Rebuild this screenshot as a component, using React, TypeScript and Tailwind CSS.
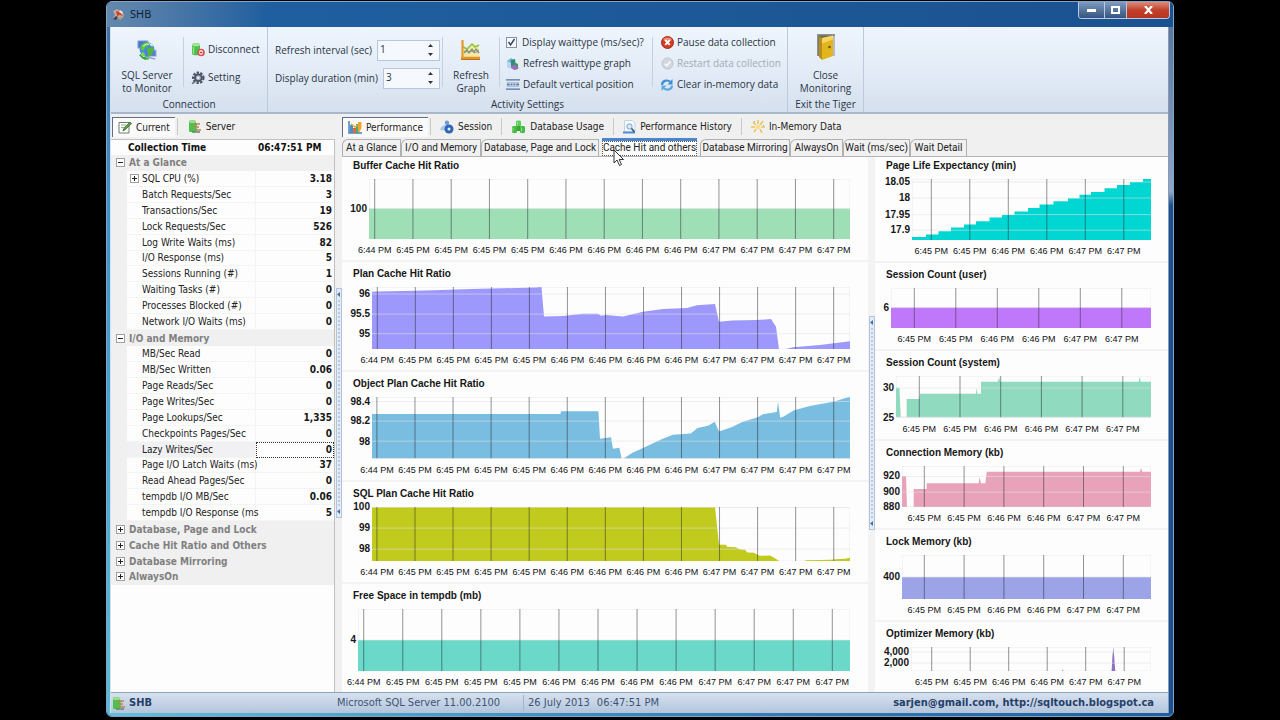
import React from "react";

type Pt = [number, number];

interface ChartProps {
  title: string;
  color: string;
  width: number;
  height: number;
  points: Pt[];
  ticks: number[];
  labels: string[];
  yTicks: { at: number; text: string }[];
  pad: string;
  first?: boolean;
}

const series = (start: number, step: number, count: number) =>
  Array.from({ length: count }, (_, i) => start + step * i);

const flat = (w: number, y: number): Pt[] => [[0, y], [w, y]];

const stairs = (xs: number[], ys: number[], end: number): Pt[] => {
  const out: Pt[] = [];
  xs.forEach((x, i) => {
    out.push([x, ys[i]]);
    out.push([i + 1 < xs.length ? xs[i + 1] : end, ys[i]]);
  });
  return out;
};

const LONG = [
  "6:44 PM", "6:45 PM", "6:45 PM", "6:45 PM", "6:45 PM", "6:46 PM", "6:46 PM",
  "6:46 PM", "6:46 PM", "6:47 PM", "6:47 PM", "6:47 PM", "6:47 PM",
];
const SHORT = ["6:45 PM", "6:45 PM", "6:46 PM", "6:46 PM", "6:47 PM", "6:47 PM"];

const leftCharts: ChartProps[] = [
  {
    title: "Buffer Cache Hit Ratio", color: "#9fdfb6", width: 481, height: 61, pad: "pl-[27px] pr-[18px]",
    points: flat(481, 30), ticks: series(5.7, 38.25, 13), labels: LONG, yTicks: [{ at: 30, text: "100" }], first: true,
  },
  {
    title: "Plan Cache Hit Ratio", color: "#9d98fb", width: 478, height: 62, pad: "pl-[30px] pr-[18px]",
    points: [
      [0, 4.7], [5, 4.5], [43, 3.7], [70, 3], [100, 2], [130, 1.3], [164, 0.5], [169.5, 0], [172, 29.3], [191, 29],
      [200, 28], [211, 26.7], [226, 26.7], [229, 28.7], [234, 28], [251, 29.5], [271, 24.7], [291, 22], [315, 21],
      [325, 18.3], [343, 17], [347, 34.7], [360, 33.5], [385, 33], [399, 32], [404, 39.7], [407, 62], [413, 62],
      [421, 60], [448, 57.7], [478, 54],
    ],
    ticks: series(5.3, 38.03, 13), labels: LONG,
    yTicks: [{ at: 7, text: "96" }, { at: 27, text: "95.5" }, { at: 46.5, text: "95" }],
  },
  {
    title: "Object Plan Cache Hit Ratio", color: "#79bde0", width: 478, height: 61, pad: "pl-[30px] pr-[18px]",
    points: [
      [0, 17], [188.5, 17], [189, 14.3], [226.4, 14.3], [228, 41.7], [239, 40], [241, 51.7], [247.4, 50.7],
      [249.5, 61], [252, 61], [260, 55.7], [270.5, 51], [289.5, 42], [301, 37.7], [318.7, 36.3], [325.6, 31],
      [336, 28.7], [342.8, 24.7], [347, 34.3], [360, 30], [370.3, 25], [385.8, 20.3], [391, 17.3], [404.8, 15],
      [406, 4.7], [408.2, 20.7], [411.7, 19.5], [422, 13.3], [439, 8.7], [461.6, 4.7], [473.6, 1], [478, 0],
    ],
    ticks: series(4.9, 38.07, 13), labels: LONG,
    yTicks: [{ at: 4.5, text: "98.4" }, { at: 24, text: "98.2" }, { at: 44, text: "98" }],
  },
  {
    title: "SQL Plan Cache Hit Ratio", color: "#c0cb1d", width: 478, height: 54, pad: "pl-[30px] pr-[18px]",
    points: [
      [0, 0], [343, 0], [347, 37.7], [354, 37.7], [355, 39.7], [363.5, 40], [367.6, 42], [373, 42.7], [375.5, 45.3],
      [382, 45.7], [387.5, 48.7], [398, 48.3], [403, 51], [407.5, 54], [432, 54], [434, 53], [460, 52.5], [463, 52],
      [473, 51.5], [478, 50.5],
    ],
    ticks: series(4.9, 38.07, 13), labels: LONG,
    yTicks: [{ at: 0.5, text: "100" }, { at: 21, text: "99" }, { at: 42, text: "98" }],
  },
  {
    title: "Free Space in tempdb (mb)", color: "#6ad9c9", width: 492, height: 62, pad: "pl-[16px] pr-[18px]",
    points: flat(492, 31), ticks: series(5.7, 39.05, 13), labels: LONG, yTicks: [{ at: 31, text: "4" }],
  },
];

const rightCharts: ChartProps[] = [
  {
    title: "Page Life Expectancy (min)", color: "#00d6d2", width: 239, height: 61, pad: "pl-[37px] pr-[17px]", first: true,
    points: stairs(
      [0, 14, 26.5, 39, 52, 64, 77.5, 90, 102.5, 116, 127.5, 141.5, 156, 167.5, 179, 192.5, 205, 218, 231],
      [57.7, 55.3, 52, 48.3, 45.3, 42, 38.3, 36, 32.3, 29, 25.3, 22.3, 19.3, 15.7, 13, 9.3, 6, 3, 0],
      239,
    ),
    ticks: series(19.3, 38.5, 6), labels: SHORT,
    yTicks: [{ at: 3, text: "18.05" }, { at: 19, text: "18" }, { at: 35.5, text: "17.95" }, { at: 51, text: "17.9" }],
  },
  {
    title: "Session Count (user)", color: "#c078fb", width: 260, height: 40, pad: "pl-[16px] pr-[17px]",
    points: flat(260, 19.5), ticks: series(23.3, 41.5, 6), labels: SHORT, yTicks: [{ at: 19.5, text: "6" }],
  },
  {
    title: "Session Count (system)", color: "#90dac0", width: 255, height: 41, pad: "pl-[21px] pr-[17px]",
    points: [
      [0, 11.7], [3.5, 11.7], [4.7, 41], [10.7, 41], [10.7, 23], [23.3, 23], [24, 17.7], [79.8, 17.7], [80.7, 12],
      [81.4, 17.7], [85, 17.7], [85, 5.7], [101.7, 5.7], [103.3, 1], [104, 5.7], [242.7, 5.7], [243.7, 0.5],
      [244.7, 5.7], [255, 5.7],
    ],
    ticks: series(23.3, 40.7, 6), labels: SHORT, yTicks: [{ at: 12, text: "30" }, { at: 41, text: "25" }],
  },
  {
    title: "Connection Memory (kb)", color: "#e8a2b9", width: 249, height: 41, pad: "pl-[27px] pr-[17px]",
    points: [
      [0, 10], [4, 10], [5, 41], [11.7, 41], [11.7, 23], [24.7, 23], [24.7, 17.3], [76.7, 17.3], [77.5, 11],
      [79, 17.3], [83.3, 17.3], [84.7, 5.7], [238, 5.7], [239, 1.7], [240.3, 5.7], [249, 5.7],
    ],
    ticks: series(22.3, 39.8, 6), labels: SHORT,
    yTicks: [{ at: 10.5, text: "920" }, { at: 26, text: "900" }, { at: 41, text: "880" }],
  },
  {
    title: "Lock Memory (kb)", color: "#9ca4e7", width: 249, height: 44, pad: "pl-[27px] pr-[17px]",
    points: flat(249, 22), ticks: series(22.3, 39.8, 6), labels: SHORT, yTicks: [{ at: 22, text: "400" }],
  },
  {
    title: "Optimizer Memory (kb)", color: "#8d70c4", width: 240, height: 24, pad: "pl-[36px] pr-[17px]",
    points: [
      [0, 24], [151, 24], [151.7, 22], [152.4, 24], [200.6, 24], [201.4, 10], [202.3, 0], [203.2, 10], [204.3, 24],
      [240, 24],
    ],
    ticks: series(20.7, 38.5, 6), labels: SHORT, yTicks: [{ at: 5, text: "4,000" }, { at: 16, text: "2,000" }],
  },
];

function Chart({ title, color, width, height, points, ticks, labels, yTicks, pad, first }: ChartProps) {
  const area = `M0 ${height} ${points.map(([x, y]) => `L${x} ${y}`).join(" ")} L${width} ${height} Z`;
  return (
    <section className={`flex min-h-0 flex-col bg-[#fdfdfd] font-['Liberation_Sans',sans-serif] ${first ? "pt-[2px]" : "pt-[5px]"}`}>
      <h3 className="mb-[6px] h-[14px] pl-[11px] text-[10px] leading-[14px] font-bold whitespace-nowrap text-[#161616]">
        {title}
      </h3>
      <div className={`flex min-h-0 flex-1 flex-col ${pad}`}>
        <div className="relative min-h-0 flex-1">
          <svg className="block h-full w-full" viewBox={`0 0 ${width} ${height}`} preserveAspectRatio="none" aria-hidden="true">
            <rect x="0" y="0" width={width} height={height} fill="none" stroke="#ececec" />
            <path d={area} fill={color} />
            {yTicks.map((t) => (
              <line key={t.text} x1="0" x2={width} y1={t.at} y2={t.at} stroke="#e4e4e4" strokeOpacity="0.55" vectorEffect="non-scaling-stroke" />
            ))}
            {ticks.map((x) => (
              <line key={x} x1={x} x2={x} y1="0" y2={height} stroke="#202028" strokeOpacity="0.48" vectorEffect="non-scaling-stroke" />
            ))}
          </svg>
          {yTicks.map((t) => (
            <span
              key={t.text}
              className="absolute right-full mr-[2px] -translate-y-1/2 text-[10px] leading-[12px] font-bold text-[#161616]"
              style={{ top: `${(t.at / height) * 100}%` }}
            >
              {t.text}
            </span>
          ))}
        </div>
        <div className="relative h-[21px] shrink-0">
          {ticks.map((x, i) => (
            <span
              key={x}
              className="absolute top-0 -translate-x-1/2 text-[9px] leading-[22px] whitespace-nowrap text-[#111]"
              style={{ left: `${(x / width) * 100}%` }}
            >
              {labels[i]}
            </span>
          ))}
        </div>
      </div>
    </section>
  );
}

/* ---------- icons ---------- */

const ServerIcon = () => (
  <svg width="15" height="15" viewBox="0 0 15 15" aria-hidden="true">
    <path d="M2 2.5C2 .8 9 .8 9 2.5V12c0 1.6-7 1.6-7 0z" fill="#4fbf4f" />
    <ellipse cx="5.5" cy="2.7" rx="3.5" ry="1.4" fill="#9be08f" />
    <path d="M7 5h6M7 8h5M8 11h6" stroke="#c97f4a" strokeWidth="1.6" />
    <path d="M5 13h8" stroke="#5a8a6a" strokeWidth="1.4" />
    <path d="M9.5 4v9" stroke="#7ab06a" strokeWidth="1.2" />
  </svg>
);

const DisconnectIcon = () => (
  <svg width="14" height="15" viewBox="0 0 14 15" aria-hidden="true">
    <path d="M1 2.5C1 .7 9 .7 9 2.5V12c0 1.8-8 1.8-8 0z" fill="#4cc04c" />
    <ellipse cx="5" cy="2.7" rx="4" ry="1.5" fill="#a8e59b" />
    <path d="M2.5 5v7" stroke="#9be08f" strokeWidth="1.3" />
    <circle cx="10" cy="10.5" r="3" fill="#fff" stroke="#dc5050" strokeWidth="1.7" />
    <path d="M8.5 10.5h3" stroke="#c23c3c" strokeWidth="1.4" />
  </svg>
);

const GearIcon = () => (
  <svg width="14" height="14" viewBox="0 0 14 14" aria-hidden="true">
    <circle cx="7.3" cy="6.8" r="5.2" fill="none" stroke="#4c5666" strokeWidth="2.2" strokeDasharray="2.4 1.3" />
    <circle cx="7.3" cy="6.8" r="3.4" fill="#aab3c4" stroke="#46505f" strokeWidth="1.8" />
    <circle cx="7.3" cy="6.8" r="1.2" fill="#eef3fa" />
    <path d="M1 12.5l3-1.5" stroke="#6b7587" strokeWidth="1.6" />
  </svg>
);

const MonitorIcon = () => (
  <svg width="22" height="22" viewBox="0 0 24 24" aria-hidden="true">
    <rect x="2" y="2" width="11" height="8" fill="#4d74c4" stroke="#9db8e6" />
    <rect x="14" y="12" width="8" height="7" fill="#5b7fd0" stroke="#b6c9ee" />
    <circle cx="12" cy="11.5" r="8" fill="#4a86da" />
    <path d="M8 5c3-2 6-1.5 7 0l-2 3-3 1-2 4-3-2c0-3 1-5 3-6z" fill="#5fc83d" />
    <path d="M12 11l6-3 1.5 4-3 6-3 1z" fill="#53b935" />
    <path d="M6 14l3 1 1 4-3-.5z" fill="#7ed85c" />
    <path d="M14 4l4 2 1 2-3-.5z" fill="#d9eafd" />
    <path d="M8 8c2-3 4-3 6-2" stroke="#d9f5cd" strokeWidth="1.2" fill="none" />
    <path d="M4 17l4 4 3-1M9 22l5-1" stroke="#3da832" strokeWidth="2" fill="none" />
    <path d="M14 20l7 2" stroke="#8aa0be" strokeWidth="1.6" />
  </svg>
);

const GraphIcon = () => (
  <svg width="22" height="22" viewBox="0 0 22 22" aria-hidden="true">
    <path d="M3 6l5 3 4-5 7 4v10H3z" fill="#f7e7a0" />
    <path d="M3 8l4 2 5-5 3 3 4-2" fill="none" stroke="#8ec24a" strokeWidth="1.5" />
    <path d="M4 14l3-3 2 3 3-4 2 3 2-3 3 4" fill="none" stroke="#4da08a" strokeWidth="1.3" />
    <path d="M4 12l4 1 4-1 3 2 4-3" fill="none" stroke="#d5786a" />
    <path d="M2.5 1v18" stroke="#e59a2e" strokeWidth="2.2" />
    <path d="M1 19h19" stroke="#e0982c" strokeWidth="2.6" />
    <path d="M1 20.5h19" stroke="#b86f1c" />
  </svg>
);

const WaitIcon = () => (
  <svg width="14" height="14" viewBox="0 0 14 14" aria-hidden="true">
    <path d="M1 4l4-3 3 2v9l-7-2z" fill="#6fb6c8" />
    <path d="M5 3l4-1 1 8H5z" fill="#2f8d7d" />
    <path d="M8 5l4 2v5l-4 1z" fill="#3f9e4e" />
    <path d="M3 9l5 4 5-2-4-3z" fill="#9c6ac0" />
    <path d="M1 4l4 2v6l-4-2z" fill="#b9d7ec" />
  </svg>
);

const VerticalIcon = () => (
  <svg width="15" height="13" viewBox="0 0 15 13" aria-hidden="true">
    <path d="M0 1.5h15M0 11.5h15" stroke="#54749d" strokeWidth="1.5" />
    <path d="M1 4.5h13M1 8.5h13" stroke="#a3b9d4" />
    <path d="M1 6.5h3M5 6.5h2M8 6.5h2M11 6.5h3" stroke="#5d7da6" strokeWidth="2" />
  </svg>
);

const PauseIcon = () => (
  <svg width="13" height="13" viewBox="0 0 13 13" aria-hidden="true">
    <circle cx="6.5" cy="6.5" r="6" fill="#d33c24" stroke="#a82a18" />
    <ellipse cx="6.5" cy="3.5" rx="4" ry="2" fill="#ef8a72" />
    <path d="M4.2 4.2l4.6 4.6M8.8 4.2L4.2 8.8" stroke="#fff" strokeWidth="1.9" />
  </svg>
);

const RestartIcon = () => (
  <svg width="13" height="13" viewBox="0 0 13 13" aria-hidden="true">
    <circle cx="6.5" cy="6.5" r="5.5" fill="#d3d8df" stroke="#bcc3cc" />
    <path d="M3.8 6.8l2 2 3.5-4.3" fill="none" stroke="#f7f9fb" strokeWidth="1.7" />
  </svg>
);

const ClearIcon = () => (
  <svg width="14" height="14" viewBox="0 0 14 14" aria-hidden="true">
    <path d="M2 7c0-4 5-6 8.5-3" fill="none" stroke="#3e8ed0" strokeWidth="2.2" />
    <path d="M12.5 1v5.5H7.5z" fill="#3e8ed0" />
    <path d="M12 7.5c0 4-5 5.5-8.5 2.5" fill="none" stroke="#5fa9e0" strokeWidth="2.2" />
    <path d="M1.5 13V7.5h5z" fill="#5fa9e0" />
  </svg>
);

const DoorIcon = () => (
  <svg width="22" height="28" viewBox="0 0 22 28" aria-hidden="true">
    <path d="M2 1h18v22H2z" fill="#8d9099" />
    <path d="M3.5 2.5h15v20h-15z" fill="#6a6648" />
    <path d="M18 3h2v20h-2z" fill="#b8bcc4" />
    <path d="M7 5l11-2.5v20.5l-11 4z" fill="#e2b51c" />
    <path d="M7 5l11-2.5v4l-11 4z" fill="#f3d560" />
    <path d="M4 3l3 2v22l-3-3z" fill="#b58f1a" />
    <circle cx="14.5" cy="14" r="1.3" fill="#6d5610" />
  </svg>
);

const NoteIcon = () => (
  <svg width="14" height="13" viewBox="0 0 14 13" aria-hidden="true">
    <path d="M1 1.5h10v10.5H1z" fill="#fff" stroke="#6f7a72" />
    <path d="M3 4h5M3 6.5h3" stroke="#8fb07c" />
    <path d="M5 10l1-3 6-6 1.5 1.5-6 6z" fill="#5da545" stroke="#33592a" strokeWidth=".7" />
  </svg>
);

const PerfIcon = () => (
  <svg width="14" height="13" viewBox="0 0 14 13" aria-hidden="true">
    <path d="M1 0v12h13" fill="none" stroke="#4a80b8" strokeWidth="1.5" />
    <path d="M2 4h3v8H2z" fill="#3f93cf" />
    <path d="M5 7h3v5H5z" fill="#e0693a" />
    <path d="M8 3h3v9H8z" fill="#3fae70" />
    <path d="M10 1h3.5v6l-2 4H10z" fill="#f0a52f" />
    <path d="M3 3l4 3 3-2" stroke="#f0a52f" strokeWidth="1.5" fill="none" />
  </svg>
);

const SessionIcon = () => (
  <svg width="14" height="14" viewBox="0 0 14 14" aria-hidden="true">
    <circle cx="7" cy="2.7" r="2.2" fill="#6d9bd3" />
    <path d="M0 10c.5-3 3-5 6-5l3 6z" fill="#a9c6e8" />
    <circle cx="9" cy="9" r="4.5" fill="#2f66b5" />
    <circle cx="9" cy="9" r="1.5" fill="#e9f1fb" />
  </svg>
);

const UsageIcon = () => (
  <svg width="15" height="14" viewBox="0 0 15 14" aria-hidden="true">
    <path d="M5 1.5c0-1.5 5-1.5 5 0V7H5z" fill="#5fce5a" />
    <path d="M1 7c0-1.5 5-1.5 5 0v5c0 1.5-5 1.5-5 0z" fill="#45bb42" />
    <path d="M9 7c0-1.5 5-1.5 5 0v5c0 1.5-5 1.5-5 0z" fill="#45bb42" />
    <path d="M6 6h3v5H6z" fill="#38a53a" />
    <path d="M2 7.5v4M10.5 7.5v4M6.5 2v3" stroke="#8fe388" />
  </svg>
);

const HistoryIcon = () => (
  <svg width="13" height="14" viewBox="0 0 13 14" aria-hidden="true">
    <path d="M1.5 .5h8l2.5 2.5v9H1.5z" fill="#f2f7fc" stroke="#c5d3e2" />
    <path d="M0 12.5h12" stroke="#4f8fd0" strokeWidth="2" />
    <circle cx="6.5" cy="6.5" r="2.6" fill="#dceaf8" stroke="#7ba0c8" />
    <path d="M8.5 8.5l3 3.5" stroke="#35557c" strokeWidth="1.7" />
  </svg>
);

const SparkIcon = () => (
  <svg width="14" height="14" viewBox="0 0 14 14" aria-hidden="true">
    <path d="M7 0v4M2 2l3 3M12 1L9 5M0 7h4M10 7h4M3 12l2-3M11 13L9 9" stroke="#edc254" strokeWidth="1.5" />
    <circle cx="7" cy="7" r="2.2" fill="#f7dd84" />
    <path d="M3 1l1 1M12 6l1-1" stroke="#9aa8bd" />
  </svg>
);

const AppIcon = () => (
  <svg width="13" height="13" viewBox="0 0 13 13" aria-hidden="true">
    <path d="M1 3l4-2 3 2 4 3-1 4-3-1-3 2-4-1 2-3z" fill="#c5a99c" />
    <path d="M4 3l4 1 3 4-3-1-3 1z" fill="#c4472b" />
    <path d="M1 11l3-3 2 1-2 3z" fill="#34415e" />
    <path d="M8 2l3 2-1 2-3-2z" fill="#e7e2dd" />
    <path d="M6 9l4 1-2 2z" fill="#e7a33b" />
  </svg>
);

/* ---------- ribbon ---------- */

const Rule = () => <div className="mt-[10px] h-[50px] w-px shrink-0 bg-[#c3d0e0]" />;

function BigButton({ icon, lines, width }: { icon: React.ReactNode; lines: string[]; width: string }) {
  return (
    <button type="button" className={`flex shrink-0 flex-col items-center ${width}`}>
      <span className="mb-[4px] flex h-[38px] items-end justify-center pb-[4px]">{icon}</span>
      {lines.map((l) => (
        <span key={l} className="leading-[13px]">{l}</span>
      ))}
    </button>
  );
}

function SmallButton({ icon, children, disabled }: { icon: React.ReactNode; children: string; disabled?: boolean }) {
  return (
    <button type="button" disabled={disabled} className="flex h-[21px] items-center gap-[3px] whitespace-nowrap disabled:text-[#a3abb5]">
      <span className="flex w-[14px] justify-center">{icon}</span>
      {children}
    </button>
  );
}

function Spinner({ id, label, value }: { id: string; label: string; value: string }) {
  return (
    <div className="flex h-[22px] items-center gap-[5px]">
      <label htmlFor={id} className="whitespace-nowrap">{label}</label>
      <div className="flex h-[21px] flex-1 border border-[#b5c7dd] bg-[#f5f9fe]">
        <input id={id} defaultValue={value} className="w-0 min-w-0 flex-1 bg-transparent pb-[2px] pl-[2px] outline-none" />
        <div className="flex w-[17px] flex-col items-center justify-around">
          <button type="button" aria-label={`Increase ${label}`}>
            <svg className="block" width="5" height="3" viewBox="0 0 5 3"><path d="M0 3l2.5-3L5 3z" fill="#333" /></svg>
          </button>
          <button type="button" aria-label={`Decrease ${label}`}>
            <svg className="block" width="5" height="3" viewBox="0 0 5 3"><path d="M0 0l2.5 3L5 0z" fill="#333" /></svg>
          </button>
        </div>
      </div>
    </div>
  );
}

const GroupLabel = ({ children }: { children: string }) => (
  <div className="h-[16px] text-center leading-[16px] whitespace-nowrap">{children}</div>
);

function Ribbon() {
  return (
    <div className="flex h-[87px] shrink-0 border-b-2 border-[#a9b8c9] bg-linear-to-b from-[#eef5fd] via-[#e3ecf7] to-[#d5e0ee] font-['Open_Sans','Noto_Sans',sans-serif] text-[10px] text-[#2a3444]">
      <div className="flex w-[157px] shrink-0 flex-col border-r border-[#bccadb]">
        <div className="flex flex-1">
          <BigButton icon={<MonitorIcon />} lines={["SQL Server", "to Monitor"]} width="w-[72px]" />
          <Rule />
          <div className="flex flex-col gap-[7px] pt-[12px] pl-[7px]">
            <SmallButton icon={<DisconnectIcon />}>Disconnect</SmallButton>
            <SmallButton icon={<GearIcon />}>Setting</SmallButton>
          </div>
        </div>
        <GroupLabel>Connection</GroupLabel>
      </div>
      <div className="flex w-[520px] shrink-0 flex-col border-r border-[#bccadb]">
        <div className="flex flex-1">
          <div className="flex w-[174px] shrink-0 flex-col gap-[6px] pt-[12px] pr-[2px] pl-[7px]">
            <Spinner id="interval" label="Refresh interval (sec)" value="1" />
            <Spinner id="duration" label="Display duration (min)" value="3" />
          </div>
          <Rule />
          <BigButton icon={<GraphIcon />} lines={["Refresh", "Graph"]} width="w-[56px]" />
          <Rule />
          <div className="flex w-[152px] shrink-0 flex-col pt-[5px] pl-[6px]">
            <label className="flex h-[21px] items-center gap-[5px] whitespace-nowrap">
              <span className="relative flex">
                <input type="checkbox" defaultChecked className="size-[11px] appearance-none border border-[#8593a6] bg-[#f6f9fd]" />
                <svg className="absolute inset-0" width="11" height="11" viewBox="0 0 11 11" aria-hidden="true">
                  <path d="M2.5 5l2 3 4-6" fill="none" stroke="#3c4658" strokeWidth="1.5" />
                </svg>
              </span>
              Display waittype (ms/sec)?
            </label>
            <SmallButton icon={<WaitIcon />}>Refresh waittype graph</SmallButton>
            <SmallButton icon={<VerticalIcon />}>Default vertical position</SmallButton>
          </div>
          <Rule />
          <div className="flex flex-col pt-[5px] pl-[7px]">
            <SmallButton icon={<PauseIcon />}>Pause data collection</SmallButton>
            <SmallButton icon={<RestartIcon />} disabled>Restart data collection</SmallButton>
            <SmallButton icon={<ClearIcon />}>Clear in-memory data</SmallButton>
          </div>
        </div>
        <GroupLabel>Activity Settings</GroupLabel>
      </div>
      <div className="flex w-[76px] shrink-0 flex-col border-r border-[#bccadb]">
        <div className="flex flex-1 justify-center">
          <BigButton icon={<DoorIcon />} lines={["Close", "Monitoring"]} width="w-[72px]" />
        </div>
        <GroupLabel>Exit the Tiger</GroupLabel>
      </div>
    </div>
  );
}

/* ---------- left grid ---------- */

interface Group {
  name: string;
  rows: [string, string][];
}

const groups: Group[] = [
  {
    name: "At a Glance",
    rows: [
      ["SQL CPU (%)", "3.18"], ["Batch Requests/Sec", "3"], ["Transactions/Sec", "19"], ["Lock Requests/Sec", "526"],
      ["Log Write Waits (ms)", "82"], ["I/O Response (ms)", "5"], ["Sessions Running (#)", "1"],
      ["Waiting Tasks (#)", "0"], ["Processes Blocked (#)", "0"], ["Network I/O Waits (ms)", "0"],
    ],
  },
  {
    name: "I/O and Memory",
    rows: [
      ["MB/Sec Read", "0"], ["MB/Sec Written", "0.06"], ["Page Reads/Sec", "0"], ["Page Writes/Sec", "0"],
      ["Page Lookups/Sec", "1,335"], ["Checkpoints Pages/Sec", "0"], ["Lazy Writes/Sec", "0"],
      ["Page I/O Latch Waits (ms)", "37"], ["Read Ahead Pages/Sec", "0"], ["tempdb I/O MB/Sec", "0.06"],
      ["tempdb I/O Response (ms", "5"],
    ],
  },
  { name: "Database, Page and Lock", rows: [] },
  { name: "Cache Hit Ratio and Others", rows: [] },
  { name: "Database Mirroring", rows: [] },
  { name: "AlwaysOn", rows: [] },
];

function Toggle({ open, name }: { open: boolean; name: string }) {
  return (
    <button type="button" aria-label={`Toggle ${name}`} aria-expanded={open} className="flex size-[9px] items-center justify-center border border-[#a0a0a0] bg-white">
      <svg className="block" width="5" height="5" viewBox="0 0 5 5" aria-hidden="true">
        <path d={open ? "M0 2.5h5" : "M0 2.5h5M2.5 0v5"} stroke="#222" />
      </svg>
    </button>
  );
}

function MetricsTable() {
  return (
    <table className="h-[445px] w-full table-fixed border-separate border-spacing-0 text-[10px] leading-[13px] text-[#222]">
      <colgroup>
        <col className="w-[16px]" />
        <col className="w-[15px]" />
        <col className="w-[114px]" />
        <col />
      </colgroup>
      <thead>
        <tr className="h-[15px] text-[#111]">
          <th className="p-0" />
          <th colSpan={2} className="p-0 pl-px text-left font-bold">Collection Time</th>
          <th className="p-0 pl-[2px] text-left font-bold">06:47:51 PM</th>
        </tr>
      </thead>
      <tbody>
        {groups.map((g) => (
          <React.Fragment key={g.name}>
            <tr className="h-[15px] bg-[#f0f0f0]">
              <td className="p-0 pl-[5px] align-middle"><Toggle open={g.rows.length > 0} name={g.name} /></td>
              <th colSpan={3} className="p-0 pl-[2px] text-left font-bold text-[#808080]">{g.name}</th>
            </tr>
            {g.rows.map(([name, value]) => {
              const selected = name === "Lazy Writes/Sec";
              return (
                <tr key={name} className={`h-[15px] ${selected ? "bg-[#f1f1f4]" : ""}`}>
                  <td className="bg-[#f0f0f0] p-0" />
                  <td className="border-b border-[#f4f4f4] p-0">
                    {name === "SQL CPU (%)" && <div className="flex justify-center"><Toggle open={false} name={name} /></div>}
                  </td>
                  <td className="border-r border-b border-[#f4f4f4] p-0 whitespace-nowrap">{name}</td>
                  <td className={`border-b border-[#f4f4f4] p-0 pr-[2px] text-right font-bold text-[#161616] ${selected ? "bg-white outline outline-dotted -outline-offset-1 outline-[#333]" : ""}`}>
                    {value}
                  </td>
                </tr>
              );
            })}
          </React.Fragment>
        ))}
      </tbody>
    </table>
  );
}

/* ---------- tabs ---------- */

function ViewTab({ icon, children, active }: { icon: React.ReactNode; children: string; active?: boolean }) {
  return (
    <button
      type="button"
      role="tab"
      aria-selected={!!active}
      className={`flex h-[20px] items-center gap-[4px] whitespace-nowrap ${
        active ? "border-t border-l border-[#5f6f8a] bg-[#fafafa] px-[5px] pt-px" : "px-[7px]"
      }`}
    >
      {icon}
      {children}
    </button>
  );
}

const Bar = () => <div className="mx-[2px] h-[17px] w-px bg-[#c9c9c9]" />;

const pages: { name: string; width: string }[] = [
  { name: "At a Glance", width: "w-[59px]" },
  { name: "I/O and Memory", width: "w-[80px]" },
  { name: "Database, Page and Lock", width: "w-[118px]" },
  { name: "Cache Hit and others", width: "w-[95px]" },
  { name: "Database Mirroring", width: "w-[90px]" },
  { name: "AlwaysOn", width: "w-[53px]" },
  { name: "Wait (ms/sec)", width: "w-[67px]" },
  { name: "Wait Detail", width: "w-[57px]" },
];

function PageTabs() {
  return (
    <div role="tablist" className="relative flex h-[18px] shrink-0 items-end border-b border-[#b4b4b4] font-['Roboto','Open_Sans',sans-serif] text-[10px]">
      {pages.map(({ name, width }) =>
        name === "Cache Hit and others" ? (
          <button key={name} type="button" role="tab" aria-selected="true" className={`relative mx-[3px] h-[18px] shrink-0 border-t-3 border-[#4a86cf] bg-[#fdfdfd] whitespace-nowrap ${width}`}>
            <span className="block h-[15px] leading-[14px] outline outline-dotted -outline-offset-1 outline-[#555]">{name}</span>
            <svg className="absolute top-[8px] left-[11px] z-10" width="12" height="18" viewBox="0 0 12 18" aria-hidden="true">
              <path d="M1 1v13l3-3 2.5 5.5 2-1L6.2 10.5H10.5z" fill="#fff" stroke="#333" />
            </svg>
          </button>
        ) : (
          <button key={name} type="button" role="tab" aria-selected="false" className={`h-[17px] shrink-0 rounded-tl-[6px] border border-b-0 border-[#b0b0b0] bg-[#f1f1f1] leading-[16px] whitespace-nowrap ${width}`}>
            {name}
          </button>
        ),
      )}
    </div>
  );
}

function Grip({ size }: { size: string }) {
  return (
    <div className={`flex w-[6px] flex-col items-center justify-between border border-[#b2c3db] bg-[#e3ebf6] py-[3px] ${size}`}>
      <svg width="3" height="5" viewBox="0 0 3 5" aria-hidden="true"><path d="M3 0v5L0 2.5z" fill="#4a6fa8" /></svg>
      <div className="my-[3px] w-0 flex-1 border-l-2 border-dotted border-[#bccbe0]" />
      <svg width="3" height="5" viewBox="0 0 3 5" aria-hidden="true"><path d="M3 0v5L0 2.5z" fill="#4a6fa8" /></svg>
    </div>
  );
}

export default function App() {
  return (
    <div className="flex h-screen min-h-[560px] flex-col bg-black px-[106px] pt-px pb-[3px] font-['DejaVu_Sans_Condensed','DejaVu_Sans',sans-serif] text-[#222]">
      <div className="flex min-h-0 flex-1 flex-col overflow-hidden rounded-[6px] border border-[#7fa6cb] bg-[#1f5c9e]">
        <header className="flex h-[25px] shrink-0 items-start bg-linear-to-r from-[#6488ad] via-[#1f5f9f] via-15% to-[#1b5190]">
          <div className="flex h-full flex-1 items-center gap-[5px] pl-[5px]">
            <AppIcon />
            <h1 className="font-['Open_Sans','Noto_Sans',sans-serif] text-[11px] text-[#0c1a2c]">SHB</h1>
          </div>
          <div className="mr-[3px] flex h-[17px] overflow-hidden rounded-b-[4px] border border-t-0 border-[#b9cbe0]">
            <button type="button" aria-label="Minimize" className="flex w-[26px] items-center justify-center border-r border-[#b9cbe0] bg-linear-to-b from-[#7f9cc0] to-[#35557f]">
              <svg width="9" height="3" viewBox="0 0 9 3"><rect width="9" height="3" fill="#fff" /></svg>
            </button>
            <button type="button" aria-label="Maximize" className="flex w-[22px] items-center justify-center border-r border-[#b9cbe0] bg-linear-to-b from-[#7f9cc0] to-[#35557f]">
              <svg width="9" height="8" viewBox="0 0 9 8"><rect x="1" y="1" width="7" height="6" fill="none" stroke="#fff" strokeWidth="2" /></svg>
            </button>
            <button type="button" aria-label="Close" className="flex w-[42px] items-center justify-center bg-linear-to-b from-[#d98b7c] via-[#c2402a] to-[#b5351f]">
              <svg width="9" height="8" viewBox="0 0 9 8"><path d="M1 0l7 8M8 0L1 8" stroke="#fff" strokeWidth="2.2" /></svg>
            </button>
          </div>
        </header>

        <div className="flex min-h-0 flex-1">
          <div className="w-[4px] shrink-0 border-r border-[#cfe4f2] bg-linear-to-b from-[#46709c] via-[#3f8fc8] via-25% to-[#5fb9d3]" />
          <div className="flex min-w-0 flex-1 flex-col bg-[#f0f0f0]">
            <Ribbon />

            <div className="flex min-h-0 flex-1">
              <aside className="flex w-[224px] shrink-0 flex-col">
                <div role="tablist" className="flex h-[25px] shrink-0 items-center pl-px text-[10px]">
                  <ViewTab icon={<NoteIcon />} active>Current</ViewTab>
                  <Bar />
                  <ViewTab icon={<ServerIcon />}>Server</ViewTab>
                </div>
                <div className="min-h-0 flex-1 overflow-hidden border-t border-r border-[#c0c0c0] bg-[#fdfdfd]">
                  <MetricsTable />
                </div>
              </aside>
              <div className="flex w-[7px] shrink-0 items-center justify-center">
                <Grip size="h-[230px]" />
              </div>

              <main className="flex min-w-0 flex-1 flex-col">
                <div role="tablist" className="flex h-[25px] shrink-0 items-center text-[10px]">
                  <ViewTab icon={<PerfIcon />} active>Performance</ViewTab>
                  <Bar />
                  <ViewTab icon={<SessionIcon />}>Session</ViewTab>
                  <Bar />
                  <ViewTab icon={<UsageIcon />}>Database Usage</ViewTab>
                  <Bar />
                  <ViewTab icon={<HistoryIcon />}>Performance History</ViewTab>
                  <Bar />
                  <ViewTab icon={<SparkIcon />}>In-Memory Data</ViewTab>
                </div>
                <PageTabs />
                <div className="flex min-h-0 flex-1 bg-[#f3f3f3]">
                  <div className="grid min-w-0 flex-[526] grid-rows-[103fr_108fr_107fr_100fr_108fr] gap-[2px]">
                    {leftCharts.map((c) => <Chart key={c.title} {...c} />)}
                  </div>
                  <div className="flex w-[7px] shrink-0 items-center justify-center pb-[4px]">
                    <Grip size="h-[214px]" />
                  </div>
                  <div className="grid min-w-0 flex-[293] grid-rows-[104fr_86fr_87fr_87fr_90fr_70fr] gap-[2px]">
                    {rightCharts.map((c) => <Chart key={c.title} {...c} />)}
                  </div>
                </div>
              </main>
            </div>

            <footer className="flex h-[21px] shrink-0 items-center border-t border-[#8ea3bd] bg-linear-to-b from-[#d7e2f0] to-[#b3c4da] text-[11px] text-[#3c5474]">
              <div className="flex w-[226px] shrink-0 items-center gap-[3px] font-bold text-[#24406a]"><ServerIcon />SHB</div>
              <div className="w-[186px] shrink-0">Microsoft SQL Server 11.00.2100</div>
              <div className="flex gap-[7px] border-l border-[#a3b5cc] pl-[4px]"><span>26 July 2013</span><span>06:47:51 PM</span></div>
              <div className="ml-auto pr-[14px] font-bold whitespace-nowrap text-[#24406a]">sarjen@gmail.com, http://sqltouch.blogspot.ca</div>
            </footer>
          </div>
          <div className="w-[5px] shrink-0 border-l border-[#7f9cc4] bg-linear-to-b from-[#5f7699] from-0% via-[#93a6c4] via-24% to-[#1e4f87] to-26%" />
        </div>
        <div className="h-[3px] shrink-0 bg-linear-to-r from-[#63bfd8] via-[#3a86bd] to-[#1f5f9f]" />
      </div>
    </div>
  );
}
